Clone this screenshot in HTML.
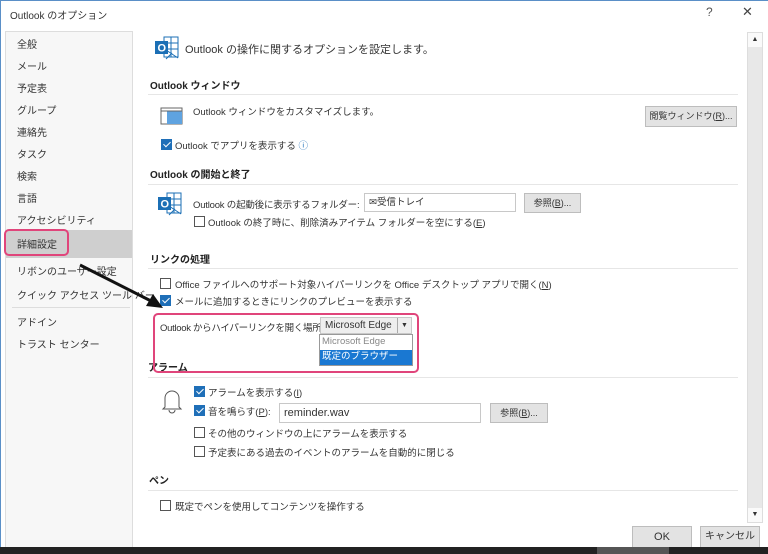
<!DOCTYPE html>
<html><head><meta charset="utf-8"><style>
*{margin:0;padding:0;box-sizing:border-box}
body{width:768px;height:554px;overflow:hidden;background:#fff;font-family:"Liberation Sans","Noto Sans CJK JP",sans-serif;font-size:9.5px;color:#333;position:relative}
.a{position:absolute;white-space:nowrap}
.h{font-weight:bold;color:#222;font-size:10px}
.ln{position:absolute;height:1px;background:#e6e6e6;left:148px;width:590px}
.cb{position:absolute;width:11px;height:11px;border:1px solid #555;background:#fff}
.cb.on{background:#1f6fb8;border-color:#1f6fb8}
.cb.on:after{content:"";position:absolute;left:3px;top:0px;width:3px;height:6px;border:solid #fff;border-width:0 1.5px 1.5px 0;transform:rotate(45deg)}
.btn{position:absolute;background:#e3e3e3;border:1px solid #bdbdbd;text-align:center;color:#333;white-space:nowrap;font-size:9px}
.inp{position:absolute;border:1px solid #c8c8c8;background:#fff;padding-left:4px;white-space:nowrap}
.nav div{position:absolute;left:17px;white-space:nowrap}
</style></head><body>
<div class="a" style="left:0;top:0;width:768px;height:1px;background:#5a8fc7"></div>
<div class="a" style="left:0;top:0;width:1px;height:554px;background:#5a8fc7"></div>
<div class="a" style="left:10px;top:7px;font-size:10px">Outlook のオプション</div>
<div class="a" style="left:706px;top:5px;font-size:12px;color:#555">?</div>
<div class="a" style="left:742px;top:4px;font-size:13px;color:#444">✕</div>
<!-- nav -->
<div class="a" style="left:5px;top:31px;width:128px;height:519px;background:#f7f7f7;border:1px solid #ddd"></div>
<div class="a" style="left:6px;top:230px;width:126px;height:28px;background:#cfcfcf"></div>
<div class="a" style="left:4px;top:229px;width:65px;height:27px;border:2.5px solid #e0457b;border-radius:5px"></div>
<div class="nav" style="position:absolute;left:0;top:0;width:130px;font-size:10px;color:#333">
<div style="top:36px">全般</div><div style="top:58px">メール</div><div style="top:80px">予定表</div><div style="top:102px">グループ</div><div style="top:124px">連絡先</div><div style="top:146px">タスク</div><div style="top:168px">検索</div><div style="top:190px">言語</div><div style="top:212px">アクセシビリティ</div><div style="top:236px">詳細設定</div><div style="top:263px">リボンのユーザー設定</div><div style="top:287px">クイック アクセス ツール バー</div><div style="top:314px">アドイン</div><div style="top:336px">トラスト センター</div>
</div>
<div class="a" style="left:12px;top:307px;width:118px;height:1px;background:#ddd"></div>
<!-- header -->
<svg class="a" style="left:154px;top:35px" width="28" height="26"><rect x="10" y="2" width="14" height="20" fill="#fff" stroke="#1b6fb5"/><path d="M10 8h14M10 14h14M17 2v20" stroke="#1b6fb5"/><path d="M12 15l12 8M12 24l6-6" stroke="#1b6fb5"/><rect x="1" y="6" width="13" height="13" fill="#1b6fb5"/><text x="3.5" y="16.5" font-size="11" font-weight="bold" fill="#fff" font-family="Liberation Sans">O</text></svg>
<div class="a" style="left:185px;top:41px;font-size:11px">Outlook の操作に関するオプションを設定します。</div>
<div class="a h" style="left:150px;top:77px">Outlook ウィンドウ</div>
<div class="ln" style="top:94px"></div>
<svg class="a" style="left:160px;top:104px" width="24" height="22"><rect x="1" y="4" width="21" height="16" fill="#fff" stroke="#666"/><rect x="7" y="7" width="15" height="13" fill="#5fa3e0"/><path d="M1 7h21" stroke="#666"/></svg>
<div class="a" style="left:193px;top:104px">Outlook ウィンドウをカスタマイズします。</div>
<div class="btn" style="left:645px;top:106px;width:92px;height:21px;line-height:19px">閲覧ウィンドウ(<u>R</u>)...</div>
<div class="cb on" style="left:161px;top:139px"></div>
<div class="a" style="left:175px;top:138px">Outlook でアプリを表示する <span style="color:#1f6fb8">ⓘ</span></div>
<div class="a h" style="left:150px;top:166px">Outlook の開始と終了</div>
<div class="ln" style="top:184px"></div>
<svg class="a" style="left:157px;top:191px" width="28" height="26"><rect x="10" y="2" width="14" height="20" fill="#fff" stroke="#1b6fb5"/><path d="M10 8h14M10 14h14M17 2v20" stroke="#1b6fb5"/><path d="M12 15l12 8M12 24l6-6" stroke="#1b6fb5"/><rect x="1" y="6" width="13" height="13" fill="#1b6fb5"/><text x="3.5" y="16.5" font-size="11" font-weight="bold" fill="#fff" font-family="Liberation Sans">O</text></svg>
<div class="a" style="left:193px;top:197px;letter-spacing:-0.2px">Outlook の起動後に表示するフォルダー:</div>
<div class="inp" style="left:364px;top:193px;width:152px;height:19px;line-height:17px">✉受信トレイ</div>
<div class="btn" style="left:524px;top:193px;width:57px;height:20px;line-height:18px">参照(<u>B</u>)...</div>
<div class="cb" style="left:194px;top:216px"></div>
<div class="a" style="left:208px;top:215px">Outlook の終了時に、削除済みアイテム フォルダーを空にする(<u>E</u>)</div>
<div class="a h" style="left:150px;top:251px">リンクの処理</div>
<div class="ln" style="top:268px"></div>
<div class="cb" style="left:160px;top:278px"></div>
<div class="a" style="left:175px;top:277px">Office ファイルへのサポート対象ハイパーリンクを Office デスクトップ アプリで開く(<u>N</u>)</div>
<div class="cb on" style="left:160px;top:295px"></div>
<div class="a" style="left:175px;top:294px">メールに追加するときにリンクのプレビューを表示する</div>
<div class="a" style="left:160px;top:320px;letter-spacing:-0.3px">Outlook からハイパーリンクを開く場所:</div>
<div class="inp" style="left:320px;top:317px;width:92px;height:17px;line-height:15px;background:#eee;font-size:10px">Microsoft Edge</div>
<div class="a" style="left:397px;top:318px;width:14px;height:15px;border-left:1px solid #aaa;font-size:7px;text-align:center;line-height:15px">▼</div>
<div class="a" style="left:319px;top:334px;width:94px;height:32px;border:1px solid #999;background:#fff"></div>
<div class="a" style="left:322px;top:336px;color:#888">Microsoft Edge</div>
<div class="a" style="left:320px;top:350px;width:92px;height:15px;background:#1a78d2;color:#fff;padding-left:2px;line-height:14px">既定のブラウザー</div>
<div class="a h" style="left:148px;top:359px">アラーム</div>
<div class="a" style="left:153px;top:313px;width:266px;height:60px;border:2.5px solid #e0457b;border-radius:5px"></div>
<div class="ln" style="top:377px"></div>
<svg class="a" style="left:161px;top:387px" width="22" height="28"><path d="M4 20V11a7 7 0 0 1 14 0v9l2 2H2z" fill="none" stroke="#555"/><path d="M8 23a3 3 0 0 0 6 0" fill="none" stroke="#555"/></svg>
<div class="cb on" style="left:194px;top:386px"></div>
<div class="a" style="left:208px;top:385px">アラームを表示する(<u>I</u>)</div>
<div class="cb on" style="left:194px;top:405px"></div>
<div class="a" style="left:208px;top:404px">音を鳴らす(<u>P</u>):</div>
<div class="inp" style="left:279px;top:403px;width:202px;height:20px;line-height:18px;font-size:11px">reminder.wav</div>
<div class="btn" style="left:490px;top:403px;width:58px;height:20px;line-height:18px">参照(<u>B</u>)...</div>
<div class="cb" style="left:194px;top:427px"></div>
<div class="a" style="left:208px;top:426px">その他のウィンドウの上にアラームを表示する</div>
<div class="cb" style="left:194px;top:446px"></div>
<div class="a" style="left:208px;top:445px">予定表にある過去のイベントのアラームを自動的に閉じる</div>
<div class="a h" style="left:149px;top:472px">ペン</div>
<div class="ln" style="top:490px"></div>
<div class="cb" style="left:160px;top:500px"></div>
<div class="a" style="left:175px;top:499px">既定でペンを使用してコンテンツを操作する</div>
<!-- scrollbar -->
<div class="a" style="left:747px;top:32px;width:16px;height:491px;background:#e8e8e8;border:1px solid #ddd"></div>
<div class="a" style="left:748px;top:33px;width:14px;height:14px;background:#fafafa;font-size:7px;text-align:center;line-height:14px">▲</div>
<div class="a" style="left:748px;top:508px;width:14px;height:14px;background:#fafafa;font-size:7px;text-align:center;line-height:14px">▼</div>
<div class="btn" style="left:632px;top:526px;width:60px;height:22px;line-height:20px;font-size:11px">OK</div>
<div class="btn" style="left:700px;top:526px;width:60px;height:22px;line-height:20px;font-size:10px">キャンセル</div>
<div class="a" style="left:0;top:547px;width:768px;height:7px;background:#222"></div>
<div class="a" style="left:597px;top:547px;width:72px;height:7px;background:#555"></div>
<!-- arrow -->
<svg class="a" style="left:0;top:0" width="768" height="554"><line x1="80" y1="265" x2="153" y2="302" stroke="#111" stroke-width="3"/><polygon points="163,308 146,306 153,294" fill="#111"/></svg>
</body></html>
